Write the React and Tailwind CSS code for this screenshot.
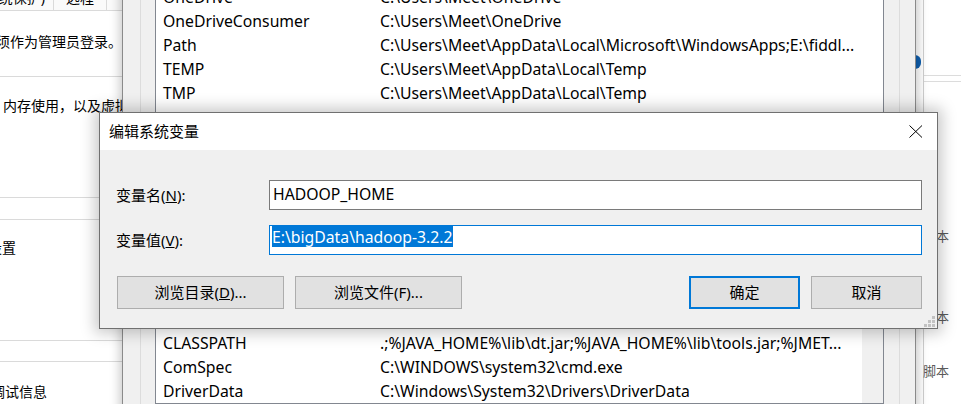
import React from 'react'

const FONT = "font-['Noto_Sans','Noto_Sans_CJK_SC',sans-serif]"

const TOP_ROWS = [
  { name: 'OneDrive', value: 'C:\\Users\\Meet\\OneDrive' },
  { name: 'OneDriveConsumer', value: 'C:\\Users\\Meet\\OneDrive' },
  { name: 'Path', value: 'C:\\Users\\Meet\\AppData\\Local\\Microsoft\\WindowsApps;E:\\fiddl...' },
  { name: 'TEMP', value: 'C:\\Users\\Meet\\AppData\\Local\\Temp' },
  { name: 'TMP', value: 'C:\\Users\\Meet\\AppData\\Local\\Temp' },
]

const BOTTOM_ROWS = [
  { name: 'ANDROID_HOME', value: 'D:\\Android\\sdk' },
  { name: 'CLASSPATH', value: '.;%JAVA_HOME%\\lib\\dt.jar;%JAVA_HOME%\\lib\\tools.jar;%JMET...' },
  { name: 'ComSpec', value: 'C:\\WINDOWS\\system32\\cmd.exe' },
  { name: 'DriverData', value: 'C:\\Windows\\System32\\Drivers\\DriverData' },
]

function Row({ name, value }) {
  return (
    <div className="flex h-[24px] items-center pl-[7px] text-[15.75px] leading-[24px] whitespace-nowrap">
      <div className="w-[217px] shrink-0">{name}</div>
      <div>{value}</div>
    </div>
  )
}

function Rule() {
  return <div className="h-px w-full bg-[#dadada]" />
}

function LeftWindow() {
  return (
    <div className="absolute left-0 top-0 flex h-full w-[140px] flex-col bg-white text-[14px] leading-[20px] whitespace-nowrap">
      {/* tab strip */}
      <div className="flex h-[11px] border-b border-[#dadada] bg-[#fafafa]">
        <div className="flex w-[54px] justify-end border-r border-[#dadada] pr-[8px]">
          <span className="-mt-[12px]">系统保护)</span>
        </div>
        <div className="flex w-[53px] justify-center border-r border-[#dadada]">
          <span className="-mt-[12px]">远程</span>
        </div>
      </div>
      <div className="mt-[21px] -ml-[4px]">须作为管理员登录。</div>
      <div className="mt-[24px]"><Rule /></div>
      <div className="mt-[19px] pl-[3px]">内存使用，以及虚拟内存</div>
      <div className="mt-[81px]"><Rule /></div>
      <div className="mt-[21px]"><Rule /></div>
      <div className="mt-[18px] -ml-[40px]">桌面设置</div>
      <div className="mt-[82px]"><Rule /></div>
      <div className="mt-[20px]"><Rule /></div>
      <div className="mt-[20px] -ml-[9px]">调试信息</div>
    </div>
  )
}

function RightWindow() {
  return (
    <div className="absolute left-[923px] top-0 flex h-full w-[60px] flex-col border-l border-[#cfcfcf] bg-white text-[13px] leading-[16px] whitespace-nowrap text-[#5a5a5a]">
      <div className="mt-[75px] h-px bg-[#dcdcdc]" />
      <div className="mt-[5px] h-px bg-[#dcdcdc]" />
      <div className="mt-[146px] flex justify-end pr-[34px]">脚本</div>
      <div className="mt-[65px] flex justify-end pr-[34px]">脚本</div>
      <div className="mt-[38px] flex justify-end pr-[34px]">脚本</div>
    </div>
  )
}

function EnvWindow() {
  return (
    <div className="absolute left-[122px] top-[-40px] h-[480px] w-[794px] border-x border-[#8a8a8a] bg-[#f0f0f0] shadow-[0_0_10px_2px_rgba(0,0,0,0.22)]">
      <div className="ml-[17px] flex h-full w-[760px] flex-col border-x border-[#dcdcdc] px-[14px]">
        {/* user variables */}
        <div className="mt-[24px] h-[170px] w-[729px] border border-[#828790] bg-white">
          {TOP_ROWS.map(r => <Row key={r.name} {...r} />)}
        </div>
        {/* system variables */}
        <div className="mt-[152px] flex w-[729px] border border-[#828790] bg-white">
          <div className="flex-1">
            {BOTTOM_ROWS.map(r => <Row key={r.name} {...r} />)}
          </div>
          <div className="w-[21px] bg-[#f0f0f0]" />
        </div>
      </div>
    </div>
  )
}

function Button({ children, primary, className = '' }) {
  return (
    <div
      className={
        'flex h-[33px] items-center justify-center bg-[#e1e1e1] text-[15px] ' +
        (primary ? 'border-2 border-[#0078d7] ' : 'border border-[#adadad] ') +
        className
      }
    >
      {children}
    </div>
  )
}

function Grip() {
  const dots = [[8, 0], [4, 4], [8, 4], [0, 8], [4, 8], [8, 8]]
  return (
    <svg className="absolute right-[2px] bottom-[1px]" width="11" height="11" viewBox="0 0 11 11">
      {dots.map(([x, y]) => <rect key={x + '-' + y} x={x} y={y} width="3" height="3" fill="#c2c2c2" />)}
    </svg>
  )
}

function EditDialog() {
  return (
    <div className="absolute left-[99px] top-[112px] flex h-[217px] w-[839px] flex-col border border-[#707070] bg-[#f0f0f0] shadow-[0_0_14px_4px_rgba(0,0,0,0.22)]">
      {/* title bar */}
      <div className="flex h-[37px] items-center justify-between bg-white pl-[9px] pr-[14px]">
        <span className="text-[15px]">编辑系统变量</span>
        <svg width="14" height="13" viewBox="0 0 14 13">
          <path d="M0.5 0.5 L13 12.5 M13 0.5 L0.5 12.5" stroke="#000" strokeWidth="1" fill="none" />
        </svg>
      </div>

      {/* name */}
      <div className="mt-[30px] flex items-center pl-[16px]">
        <div className="w-[153px] text-[15px]">变量名(<u>N</u>):</div>
        <div className="flex h-[30px] w-[653px] items-center border border-[#7a7a7a] bg-white pl-[3px] text-[15.75px]">
          HADOOP_HOME
        </div>
      </div>

      {/* value */}
      <div className="mt-[15px] flex items-center pl-[16px]">
        <div className="w-[153px] text-[15px]">变量值(<u>V</u>):</div>
        <div className="flex h-[30px] w-[653px] items-start border border-[#0078d7] bg-white pl-[2px]">
          <span className="h-[21px] bg-[#0078d7] pt-[1px] text-[15.75px] leading-[20px] text-white">
            E:\bigData\hadoop-3.2.2
          </span>
        </div>
      </div>

      {/* buttons */}
      <div className="mt-[21px] flex pl-[17px] pr-[15px]">
        <Button className="w-[167px]">浏览目录(<u>D</u>)...</Button>
        <Button className="ml-[11px] w-[167px]">浏览文件(F)...</Button>
        <Button primary className="ml-auto w-[111px]">确定</Button>
        <Button className="ml-[11px] w-[111px]">取消</Button>
      </div>

      <Grip />
    </div>
  )
}

export default function App() {
  return (
    <div className={'relative h-[404px] w-[961px] overflow-hidden bg-white text-black ' + FONT}>
      <RightWindow />
      {/* blue marker behind the variables window edge */}
      <div className="absolute left-[909px] top-[55px] h-[14px] w-[12px] rounded-full bg-[#0f5fae]" />
      <LeftWindow />
      <EnvWindow />
      <EditDialog />
    </div>
  )
}
